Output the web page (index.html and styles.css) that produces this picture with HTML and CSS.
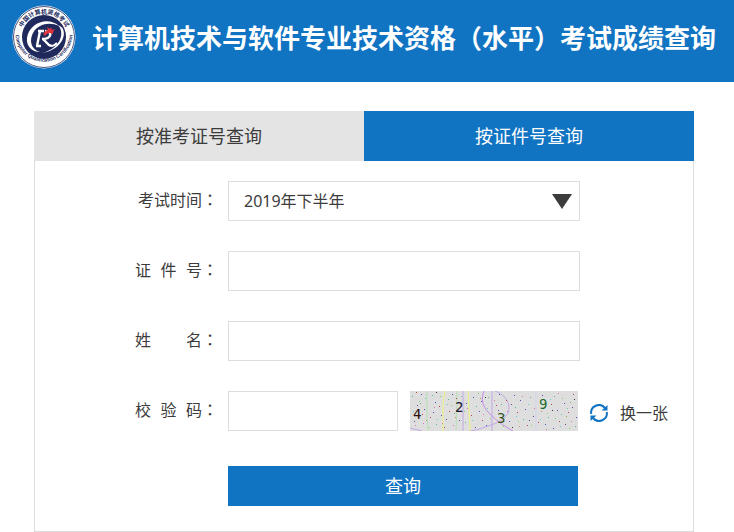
FILE: index.html
```html
<!DOCTYPE html>
<html lang="zh-CN">
<head>
    <meta charset="UTF-8">
    <meta name="viewport" content="width=device-width, initial-scale=1.0">
    <title>计算机技术与软件专业技术资格（水平）考试成绩查询</title>
    <link rel="stylesheet" href="styles.css">
</head>
<body>
    <header class="header">
        <svg class="logo" viewBox="0 0 64 64" aria-hidden="true">
            <defs>
                <path id="ringTop" d="M8.500 32a23.500 23.500 0 0 1 47 0"/>
                <path id="ringBottom" d="M3.700 24a28.600 28.600 0 1 0 56.600 0"/>
            </defs>
            <circle cx="32" cy="32" r="31.500" fill="#fff"/>
            <circle cx="32" cy="32" r="30.500" fill="none" stroke="#20295c" stroke-width=".8"/>
            <circle cx="32" cy="32" r="22" fill="#20295c"/>
            <text class="logo-cn"><textPath href="#ringTop" startOffset="50%" text-anchor="middle">中国计算机资格考试</textPath></text>
            <text class="logo-en"><textPath href="#ringBottom" startOffset="50%" text-anchor="middle">Computer Qualification Certification</textPath></text>
            <path d="M47 21C36 11 17 18 15 33c-1 8 5 14 13 14-6-2-9-6-9-12 1-14 16-20 28-14z" fill="#fff"/>
            <path d="M46 20c8 9 1 24-16 28 15-2 25-14 21-24-1-2-3-3-5-4z" fill="#fff"/>
            <path d="M32 26h-6M28 26l-3 15M24 41h5M33 26c8 0 7 8-3 8M31 34l6 6c3 2 5 1 8-2" fill="none" stroke="#fff" stroke-width="2.400"/>
            <path d="M31 30c1-3 3-5 5-5l-1-3 3 2 1-2 1 3 3-1-2 3v2l-3-1c-3 0-4 2-6 4 1-2 1-3-1-2z" fill="#e0333b"/>
        </svg>
        <h1>计算机技术与软件专业技术资格（水平）考试成绩查询</h1>
    </header>

    <main class="query">
        <div class="tabs">
            <button type="button" class="tab">按准考证号查询</button>
            <button type="button" class="tab active">按证件号查询</button>
        </div>
        <form class="query-form">
            <div class="row">
                <label for="examTime"><span>考试时间</span><span class="colon">：</span></label>
                <div class="select-box">
                    <select id="examTime">
                        <option>2019年下半年</option>
                    </select>
                </div>
            </div>
            <div class="row">
                <label for="idCard"><span class="spread">证 件 号</span><span class="colon">：</span></label>
                <input type="text" id="idCard" class="field">
            </div>
            <div class="row">
                <label for="userName"><span class="spread">姓 名</span><span class="colon">：</span></label>
                <input type="text" id="userName" class="field">
            </div>
            <div class="row">
                <label for="captcha"><span class="spread">校 验 码</span><span class="colon">：</span></label>
                <input type="text" id="captcha" class="field field-short">
                <svg class="captcha" viewBox="0 0 168 40" role="img" aria-label="4239">
                    <rect width="168" height="40" fill="#dedede"/>
                    <g fill="none">
                        <path d="M17 0v24l1 16M47 0v14l-1 25" stroke="#b5dfb5"/>
                        <path d="M35 0l-2 14v26M58 0l1 18 1 16v6" stroke="#ecf47e"/>
                        <path d="M53 0v40M82 0v40" stroke="#c0a9e5"/>
                        <path d="M126 0v40" stroke="#d5d5ee"/>
                        <path d="M85 0c8 3 14 9 14 17 0 11-14 16-24 19-5 2-9 3-15 4M0 37l12 3" stroke="#c0a9e5"/>
                        <path d="M74 0c-3 8-2 15 5 22s13 12 24 18" stroke="#c38be9"/>
                    </g>
                    <!-- noise -->
                    <g stroke-width="1" fill="none" shape-rendering="crispEdges">
                        <path stroke="#63b58c" d="M2 5.500h1M10 12.500h1M22 4.500h1M38 8.500h1M44 22.500h1M55 31.500h1M66 15.500h1M78 6.500h1M91 13.500h1M105 16.500h1M113 28.500h1M120 6.500h1M138 26.500h1M144 5.500h1M151 23.500h1M160 11.500h1M165 35.500h1M26 33.500h1"/>
                        <path stroke="#bf4545" d="M6 1.500h1M12 23.500h1M20 26.500h1M29 15.500h1M39 20.500h1M46 7.500h1M61 24.500h1M72 29.500h1M86 14.500h1M96 9.500h1M107 21.500h1M117 34.500h1M128 31.500h1M141 13.500h1M149 30.500h1M158 21.500h1M163 3.500h1M34 36.500h1"/>
                        <path stroke="#4d55bd" d="M11 3.500h1M7 14.500h1M25 11.500h1M31 24.500h1M42 3.500h1M56 12.500h1M63 6.500h1M69 20.500h1M76 34.500h1M89 3.500h1M99 30.500h1M104 4.500h1M115 18.500h1M123 25.500h1M135 33.500h1M147 19.500h1M154 12.500h1M166 26.500h1"/>
                        <path stroke="#68459a" d="M4 30.500h1M14 18.500h1M23 21.500h1M36 28.500h1M49 29.500h1M65 36.500h1M71 10.500h1M88 19.500h1M101 13.500h1M110 9.500h1M119 29.500h1M132 4.500h1M143 37.500h1M155 33.500h1M162 16.500h1"/>
                        <path stroke="#7ed65f" d="M9 10.500h1M19 36.500h1M30 5.500h1M41 14.500h1M54 20.500h1M68 2.500h1M80 27.500h1M93 35.500h1M108 30.500h1M121 34.500h1M137 22.500h1M145 27.500h1M152 7.500h1M159 37.500h1"/>
                        <path stroke="#5fd2d0" d="M3 20.500h1M15 7.500h1M27 28.500h1M37 13.500h1M51 5.500h1M62 29.500h1M77 17.500h1M94 24.500h1M106 25.500h1M118 13.500h1M130 28.500h1M140 8.500h1M150 35.500h1M157 17.500h1"/>
                        <path stroke="#d678bb" d="M5 34.500h1M13 32.500h1M24 16.500h1M32 32.500h1M43 34.500h1M57 17.500h1M73 23.500h1M84 9.500h1M97 20.500h1M112 5.500h1M124 17.500h1M136 38.500h1M148 2.500h1M161 30.500h1"/>
                        <path stroke="#353535" d="M26 1.500h1M75 6.500h1M102 36.500h1M142 19.500h1M164 8.500h1"/>
                        <path stroke="#bd9a45" d="M16 29.500h1M45 26.500h1M70 7.500h1M109 35.500h1M131 20.500h1M156 25.500h1"/>
                    </g>
                    <text x="3" y="28" fill="#2b1010">4</text>
                    <text x="45" y="21" fill="#201528">2</text>
                    <text x="87" y="32" fill="#36541d">3</text>
                    <text x="129" y="18" fill="#186b27">9</text>
                </svg>
                <a href="#" class="refresh">
                    <svg viewBox="0 0 18 18" aria-hidden="true">
                        <path d="M1.200 10A7.800 7.800 0 0 1 15 4M16.800 8A7.800 7.800 0 0 1 3 14" fill="none" stroke="#1174c3" stroke-width="2"/>
                        <path d="M17.500 1v5.500h-6zM.5 17v-5.500h6z" fill="#1174c3"/>
                    </svg>
                    <span>换一张</span>
                </a>
            </div>
            <button type="submit" class="submit">查询</button>
        </form>
    </main>
</body>
</html>
```

FILE: styles.css
```css
* {
    box-sizing: border-box;
}

body {
    margin: 0;
    background-color: #fff;
    color: #3c3c3c;
    font-family: "Noto Sans", "Noto Sans CJK SC", sans-serif;
    font-size: 16px;
}

button, input, select {
    font-family: inherit;
    font-size: inherit;
    color: inherit;
    border-radius: 0;
}

.header {
    display: flex;
    align-items: flex-start;
    gap: 16px;
    height: 82px;
    padding: 5px 12px;
    background-color: #1174c3;
}

.logo {
    flex: none;
    width: 64px;
    height: 64px;
}

.logo-cn {
    fill: #20295c;
    font-family: "Noto Sans CJK SC", sans-serif;
    font-size: 6px;
    font-weight: bold;
}

.logo-en {
    fill: #20295c;
    font-family: "Liberation Sans", sans-serif;
    font-size: 5px;
    font-weight: bold;
}

.header h1 {
    margin: 0;
    color: #fff;
    font-family: "Noto Sans CJK SC", sans-serif;
    font-size: 26px;
    line-height: 64px;
    white-space: nowrap;
}

.query {
    max-width: 660px;
    margin: 29px 40px 0 34px;
}

.tabs {
    display: flex;
}

.tab {
    flex: 1;
    height: 50px;
    padding: 0 0 2px;
    border: 0;
    background-color: #e4e4e4;
    font-size: 18px;
    cursor: pointer;
}

.tab.active {
    background-color: #1174c3;
    color: #fff;
}

.query-form {
    padding: 20px 24px 25px 100px;
    border: 1px solid #ddd;
    border-top: 0;
}

.row {
    display: flex;
    align-items: center;
    height: 40px;
    margin-bottom: 30px;
}

.row label {
    display: flex;
    flex: none;
    justify-content: flex-end;
    width: 83px;
    margin-right: 10px;
    padding-bottom: 4px;
}

.spread {
    width: 67px;
    text-align-last: justify;
}

.colon {
    font-family: "Noto Sans CJK TC", sans-serif;
}

.field, .select-box {
    width: 352px;
    height: 40px;
}

.field, .select-box select {
    padding: 0 15px;
    border: 1px solid #ddd;
    background-color: #fff;
}

.field-short {
    width: 170px;
}

.select-box {
    position: relative;
}

.select-box select {
    width: 100%;
    height: 100%;
    appearance: none;
}

.select-box::after {
    content: "";
    position: absolute;
    top: 13px;
    right: 8px;
    border: 10px solid transparent;
    border-top: 15px solid #3c3c3c;
    border-bottom: 0;
    pointer-events: none;
}

.captcha {
    flex: none;
    width: 168px;
    height: 40px;
    margin: 0 12px;
    font-family: "DejaVu Sans Mono", monospace;
    font-size: 14px;
}

.refresh {
    display: flex;
    flex: none;
    align-items: center;
    gap: 12px;
    padding-top: 4px;
    color: inherit;
    text-decoration: none;
}

.refresh svg {
    width: 18px;
    height: 18px;
}

.refresh span {
    padding-bottom: 2px;
}

.submit {
    display: block;
    width: 350px;
    height: 40px;
    margin: 35px 0 0 93px;
    padding: 0 0 2px;
    border: 0;
    background-color: #1174c3;
    color: #fff;
    font-size: 18px;
    cursor: pointer;
}
```
